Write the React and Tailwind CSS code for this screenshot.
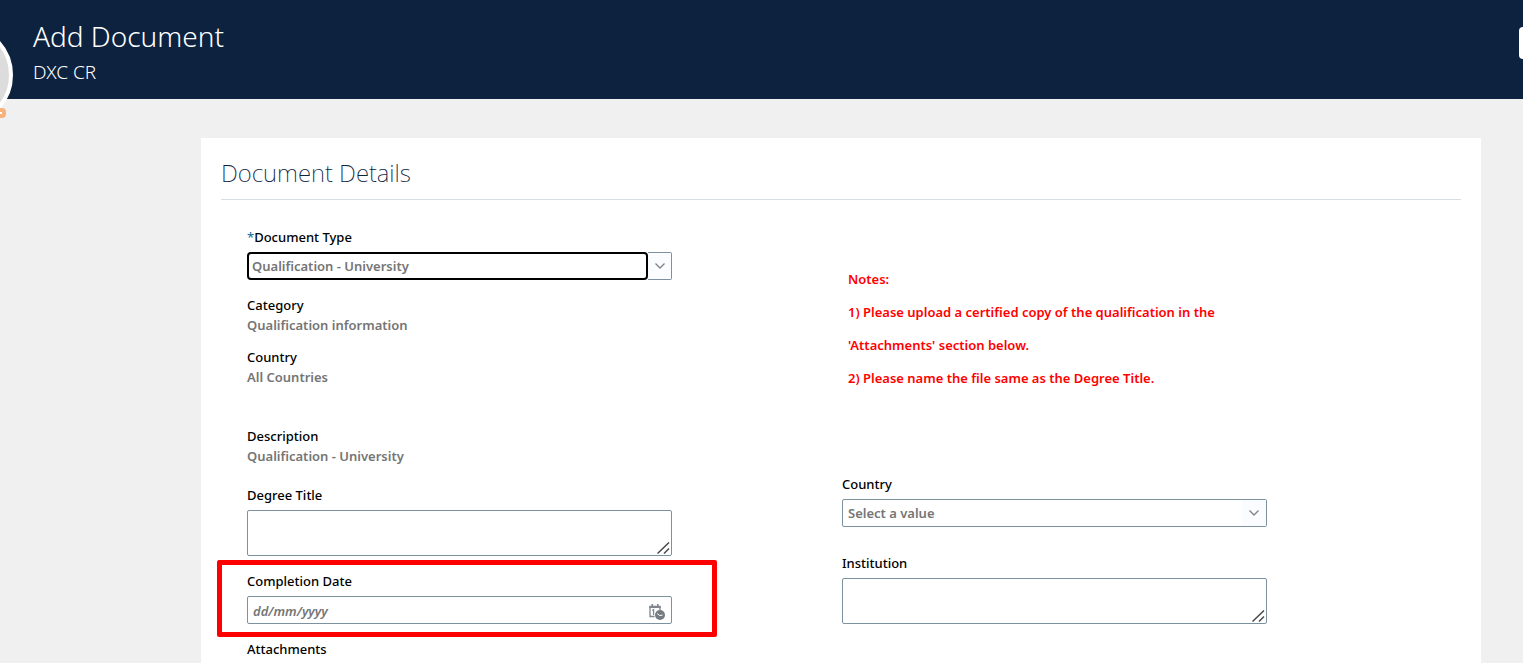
import React from 'react';
import clsx from 'clsx';

const labelClass = 'block text-[13px] leading-5 font-medium text-black';
const valueClass = 'text-[13px] leading-5 font-semibold text-[#757575]';
const boxClass =
  'block w-full rounded-xs border border-[#7d929e] bg-white px-[5px] pt-[2px] text-[13px] font-semibold text-[#757575] outline-none';

const notes = [
  'Notes:',
  '1) Please upload a certified copy of the qualification in the',
  "'Attachments' section below.",
  '2) Please name the file same as the Degree Title.',
];

function ChevronIcon() {
  return (
    <svg className="h-[6px] w-[10px]" viewBox="0 0 10 6" fill="none" stroke="#7d8388" strokeWidth="1.3">
      <path d="M0.5 0.5L5 5L9.5 0.5" />
    </svg>
  );
}

function DateTimeIcon() {
  return (
    <svg className="h-4 w-4" viewBox="0 0 16 16" fill="none">
      <path d="M5.5 12.5H1V2.5H11V6" stroke="#80868b" strokeWidth="1.3" />
      <path d="M0.4 2h11.2v2H0.4z" fill="#80868b" />
      <path d="M2.5 0h1.6v3H2.5zM8 0h1.6v3H8z" fill="#80868b" />
      <path d="M3.2 6.6L4.6 5.6V11" stroke="#80868b" strokeWidth="1.2" />
      <circle cx="11" cy="11" r="5" fill="#757b80" />
      <path d="M8.2 9.6L10.8 11.6L13.6 11" stroke="#ffffff" strokeWidth="1" />
    </svg>
  );
}

function ReadOnlyField({ label, value }) {
  return (
    <dl>
      <dt className={labelClass}>{label}</dt>
      <dd className={valueClass}>{value}</dd>
    </dl>
  );
}

function TextAreaField({ id, label }) {
  return (
    <div>
      <label htmlFor={id} className={labelClass}>
        {label}
      </label>
      <div className="relative mt-[5px]">
        <textarea id={id} className={clsx(boxClass, 'h-[46px] resize-none')} />
        {/* Resize grip */}
        <svg
          className="pointer-events-none absolute right-[2px] bottom-[2px] h-3 w-[13px]"
          viewBox="0 0 13 12"
          fill="none"
          stroke="#4a4a4a"
          strokeWidth="1.5"
        >
          <path d="M0.5 11.5L12 0.5M7 11.5L12 6.5" />
        </svg>
      </div>
    </div>
  );
}

function PageHeader() {
  return (
    <header className="relative flex h-[99px] shrink-0 flex-col bg-[#0c223f] pt-4 pl-[33px] text-white">
      <h1 className="text-[28px] leading-10 font-light">Add Document</h1>
      <p className="text-[19px] leading-8 font-light">DXC CR</p>

      {/* Avatar and its badge hang off the left edge */}
      <div className="absolute top-6 left-[-89px] size-[102px] rounded-full border-4 border-white bg-[#dcdcdc]" />
      <div className="absolute top-[108px] left-[-6px] h-[10px] w-3 rounded-[4px] bg-[#f8b27c]">
        <span className="absolute top-1 right-1 h-[2px] w-1 bg-white" />
      </div>
      <button
        type="button"
        aria-label="Actions"
        className="absolute top-[27px] right-0 h-8 w-1 rounded-l-[4px] bg-white"
      />
    </header>
  );
}

export default function App() {
  return (
    <div className="flex min-h-screen flex-col overflow-hidden bg-[#f0f0f0] font-['Noto_Sans','Open_Sans',sans-serif]">
      <PageHeader />

      <main className="mt-[39px] mr-[42px] ml-[201px] flex-1 bg-white px-5 pt-[15px]">
        <h2 className="border-b border-[#d6dfe6] pb-[6px] text-[24px] leading-10 font-extralight text-[#0c223f]">
          Document Details
        </h2>

        <form className="mt-[27px] grid grid-cols-2 pr-6 pl-[26px]">
          <div className="w-5/7">
            <label htmlFor="documentType" className={labelClass}>
              <span className="font-normal text-[#0a6aa1]">*</span>Document Type
            </label>
            <div className="mt-[5px] flex h-7">
              <input
                id="documentType"
                type="text"
                defaultValue="Qualification - University"
                className="min-w-0 flex-1 rounded-[4px] border-2 border-black px-[3px] pt-[2px] text-[13px] font-semibold text-[#757575] outline-none"
              />
              <button
                type="button"
                aria-label="Show document types"
                className="flex w-6 items-center justify-center rounded-r-xs border border-l-0 border-[#7d929e] bg-[#fafcff]"
              >
                <ChevronIcon />
              </button>
            </div>

            <div className="mt-[15px] flex flex-col gap-3">
              <ReadOnlyField label="Category" value="Qualification information" />
              <ReadOnlyField label="Country" value="All Countries" />
            </div>

            <div className="mt-[39px] mb-[19px]">
              <ReadOnlyField label="Description" value="Qualification - University" />
            </div>

            <TextAreaField id="degreeTitle" label="Degree Title" />

            {/* Completion date, outlined in red */}
            <div className="relative mt-[15px]">
              <label htmlFor="completionDate" className={labelClass}>
                Completion Date
              </label>
              <div className="relative mt-[5px]">
                <input
                  id="completionDate"
                  type="text"
                  placeholder="dd/mm/yyyy"
                  className={clsx(boxClass, 'h-7 placeholder:text-[#757575] placeholder:italic')}
                />
                <button type="button" aria-label="Select date" className="absolute top-2 right-[7px]">
                  <DateTimeIcon />
                </button>
              </div>
              <div className="pointer-events-none absolute -top-[11px] -right-[45px] -bottom-[13px] -left-[30px] rounded-xs border-5 border-[#ff0000]" />
            </div>

            <h3 className={clsx(labelClass, 'mt-[15px]')}>Attachments</h3>
          </div>

          <div className="pt-9">
            <div className="pl-[6px] text-[13px] leading-[33px] font-semibold text-[#ff0000]">
              {notes.map((note) => (
                <p key={note}>{note}</p>
              ))}
            </div>

            <div className="mt-[79px] flex w-5/7 flex-col gap-[26px]">
              <div>
                <label htmlFor="country" className={labelClass}>
                  Country
                </label>
                <div className="relative mt-[5px]">
                  <select id="country" defaultValue="" className={clsx(boxClass, 'h-7 appearance-none')}>
                    <option value="">Select a value</option>
                  </select>
                  <span className="pointer-events-none absolute inset-y-px right-px flex w-6 items-center justify-center bg-[#fafcff]">
                    <ChevronIcon />
                  </span>
                </div>
              </div>

              <TextAreaField id="institution" label="Institution" />
            </div>
          </div>
        </form>
      </main>
    </div>
  );
}
